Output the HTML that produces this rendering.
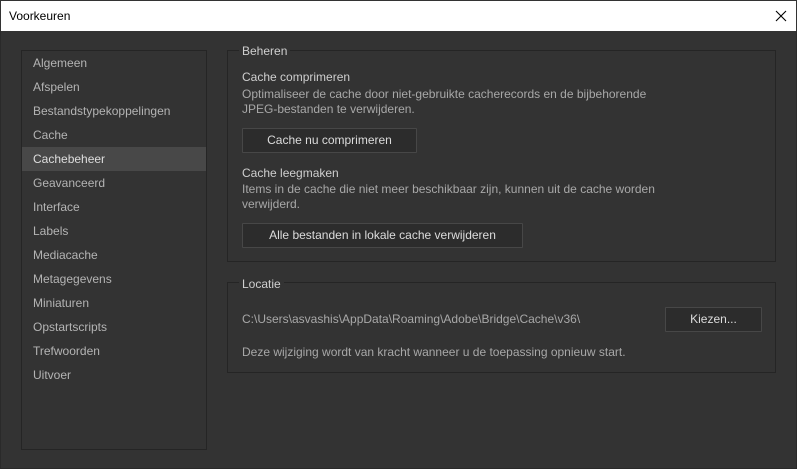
<!DOCTYPE html>
<html><head><style>
*{margin:0;padding:0;box-sizing:border-box}
body{width:797px;height:469px;background:#333;font-family:"Liberation Sans",sans-serif;font-size:12px;position:relative;overflow:hidden}
.t{position:absolute;white-space:nowrap}
#frame{position:absolute;left:0;top:0;width:797px;height:469px;border:1px solid #2a2a2a}
#title{position:absolute;left:0;top:0;width:797px;height:31px;background:#fff;border:1px solid #333;border-bottom:none}
.box{position:absolute;border:1px solid #252525}
.item{position:absolute;left:33px;color:#b4b4b4;font-size:12px}
.lbl{color:#cfcfcf}
.desc{color:#a8a8a8;line-height:15px}
.btn{position:absolute;background:#2c2c2c;border:1px solid #474747;color:#dcdcdc;text-align:center;line-height:22px;border-radius:1px}
.leg{position:absolute;background:#333;color:#cfcfcf;padding:0 3px;line-height:14px}
</style></head><body>
<div id="frame"></div>
<div id="title"><span class="t" style="left:8px;top:8px;color:#000;font-size:12px">Voorkeuren</span>
<svg style="position:absolute;left:774px;top:9px" width="12" height="12"><path d="M1 1L11 11M11 1L1 11" stroke="#000" stroke-width="1.1"/></svg></div>
<div class="box" style="left:21px;top:50px;width:186px;height:400px"></div>
<div style="position:absolute;left:22px;top:147px;width:184px;height:24px;background:#484848"></div>
<span class="item t" style="top:56px">Algemeen</span>
<span class="item t" style="top:80px">Afspelen</span>
<span class="item t" style="top:104px">Bestandstypekoppelingen</span>
<span class="item t" style="top:128px">Cache</span>
<span class="item t" style="top:152px;color:#dedede">Cachebeheer</span>
<span class="item t" style="top:176px">Geavanceerd</span>
<span class="item t" style="top:200px">Interface</span>
<span class="item t" style="top:224px">Labels</span>
<span class="item t" style="top:248px">Mediacache</span>
<span class="item t" style="top:272px">Metagegevens</span>
<span class="item t" style="top:296px">Miniaturen</span>
<span class="item t" style="top:320px">Opstartscripts</span>
<span class="item t" style="top:344px">Trefwoorden</span>
<span class="item t" style="top:368px">Uitvoer</span>

<div class="box" style="left:227px;top:50px;width:549px;height:212px"></div>
<span class="leg t" style="left:239px;top:44px">Beheren</span>
<span class="t lbl" style="left:242px;top:70px">Cache comprimeren</span>
<span class="t desc" style="left:242px;top:87px">Optimaliseer de cache door niet-gebruikte cacherecords en de bijbehorende<br>JPEG-bestanden te verwijderen.</span>
<div class="btn" style="left:242px;top:128px;width:175px;height:25px">Cache nu comprimeren</div>
<span class="t lbl" style="left:242px;top:166px">Cache leegmaken</span>
<span class="t desc" style="left:242px;top:182px">Items in de cache die niet meer beschikbaar zijn, kunnen uit de cache worden<br>verwijderd.</span>
<div class="btn" style="left:242px;top:223px;width:281px;height:25px">Alle bestanden in lokale cache verwijderen</div>

<div class="box" style="left:227px;top:282px;width:549px;height:91px"></div>
<span class="leg t" style="left:239px;top:277px">Locatie</span>
<span class="t desc" style="left:242px;top:312px">C:\Users\asvashis\AppData\Roaming\Adobe\Bridge\Cache\v36\</span>
<div class="btn" style="left:665px;top:307px;width:97px;height:25px">Kiezen...</div>
<span class="t desc" style="left:242px;top:345px">Deze wijziging wordt van kracht wanneer u de toepassing opnieuw start.</span>
</body></html>
